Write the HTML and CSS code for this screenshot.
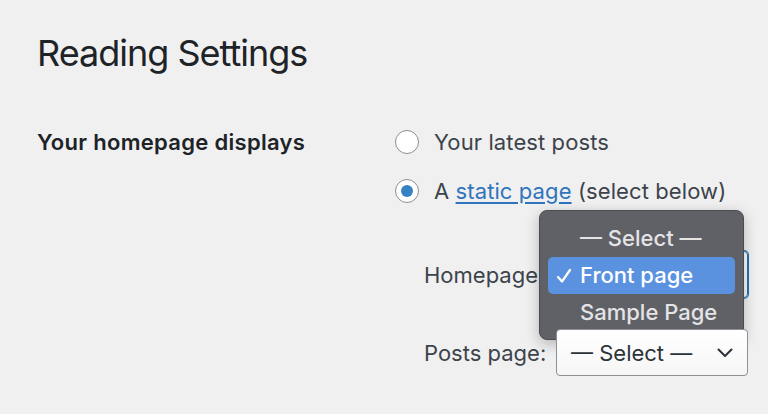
FILE: index.html
```html
<!DOCTYPE html>
<html lang="en">
<head>
<meta charset="utf-8">
<title>Reading Settings</title>
<link rel="stylesheet" href="styles.css">
</head>
<body>
<div class="wrap">
  <h1 class="title">Reading Settings</h1>
  <div class="form-row">
    <div class="th">Your homepage displays</div>
    <div class="td">
      <label class="radio"><span class="circle"></span><span>Your latest posts</span></label>
      <label class="radio"><span class="circle checked"></span><span>A <a class="link" href="#">static page</a> (select below)</span></label>
      <ul class="sub">
        <li class="sub-row">
          <span class="sub-label">Homepage:</span>
          <span class="select focused"></span>
          <div class="menu">
            <div class="item">— Select —</div>
            <div class="item active"><svg class="check" viewBox="0 0 16 16" width="16" height="16"><path d="M2 9 L6 13.5 L14 2" fill="none" stroke="#ffffff" stroke-width="2.2" stroke-linecap="round" stroke-linejoin="round"/></svg>Front page</div>
            <div class="item">Sample Page</div>
          </div>
        </li>
        <li class="sub-row">
          <span class="sub-label">Posts page:</span>
          <span class="select"><span class="select-text">— Select —</span><svg class="chev" viewBox="0 0 16 10" width="16" height="10"><path d="M1.5 1.5 L8 8 L14.5 1.5" fill="none" stroke="#2c3338" stroke-width="2" stroke-linecap="round" stroke-linejoin="round"/></svg></span>
        </li>
      </ul>
    </div>
  </div>
</div>
</body>
</html>
```

FILE: styles.css
```css
* { box-sizing: border-box; }
html, body { margin: 0; padding: 0; }
body {
  background: #f0f0f1;
  font-family: Inter, "Noto Sans", sans-serif;
  color: #3c434a;
  width: 768px;
  height: 414px;
  overflow: hidden;
}
.wrap { padding: 30px 0 0 37px; }
.title {
  margin: 0;
  font-size: 36px;
  line-height: 46px;
  font-weight: 400;
  color: #1d2327;
  letter-spacing: -1px;
}
.form-row {
  display: flex;
  margin-top: 41.5px;
}
.th {
  width: 358px;
  flex: none;
  font-size: 22px;
  line-height: 49px;
  font-weight: 600;
  color: #1d2327;
  letter-spacing: 0.3px;
}
.td { flex: 1; }
.radio {
  display: flex;
  align-items: center;
  gap: 15px;
  height: 49px;
  font-size: 22px;
  line-height: 49px;
  letter-spacing: 0.1px;
}
.circle {
  width: 24px;
  height: 24px;
  border-radius: 50%;
  border: 1.5px solid #8c8f94;
  background: #fff;
  flex: none;
  display: flex;
  align-items: center;
  justify-content: center;
}
.circle.checked::after {
  content: "";
  width: 12px;
  height: 12px;
  border-radius: 50%;
  background: #3582c4;
}
.link { color: #2f74bd; text-decoration: underline; text-underline-offset: 3px; }
.sub {
  list-style: none;
  margin: 35.5px 0 0;
  padding: 0 0 0 29px;
  display: flex;
  flex-direction: column;
  gap: 31px;
}
.sub-row {
  position: relative;
  display: flex;
  align-items: center;
  gap: 9px;
  font-size: 22px;
}
.sub-label { width: 123px; flex: none; }
.select {
  width: 192px;
  height: 47px;
  border: 1px solid #8c8f94;
  border-radius: 4px;
  background: linear-gradient(#ffffff, #f6f6f7);
  display: flex;
  align-items: center;
  justify-content: space-between;
  padding: 0 14px 0 14px;
  color: #2c3338;
}
.select.focused {
  border-color: #2271b1;
  box-shadow: 0 0 0 1px #2271b1;
}
.chev { flex: none; }
.menu {
  position: absolute;
  left: 115px;
  top: -41.5px;
  width: 205px;
  height: 130px;
  background: #5f6166;
  border: 1px solid #4b4c50;
  border-radius: 8px;
  box-shadow: 0 4px 14px rgba(0,0,0,0.25);
  padding: 9.5px 8px;
  display: flex;
  flex-direction: column;
}
.item {
  position: relative;
  height: 37px;
  line-height: 37px;
  padding-left: 32px;
  color: #e4e4e6;
  border-radius: 5px;
  font-size: 22px;
  font-weight: 500;
}
.item.active {
  background: #5b92e0;
  color: #ffffff;
}
.check {
  position: absolute;
  left: 8px;
  top: 11px;
}
```
